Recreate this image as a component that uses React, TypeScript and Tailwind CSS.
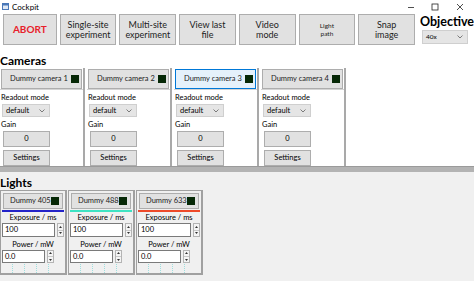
import React from 'react';

const toolButtons = [
  { lines: ['Single-site', 'experiment'] },
  { lines: ['Multi-site', 'experiment'] },
  { lines: ['View last', 'file'] },
  { lines: ['Video', 'mode'] },
  { lines: ['Light', 'path'], small: true },
  { lines: ['Snap', 'image'] },
];

const cameras = [
  { name: 'Dummy camera 1' },
  { name: 'Dummy camera 2' },
  { name: 'Dummy camera 3', focused: true },
  { name: 'Dummy camera 4' },
];

const lights = [
  { name: 'Dummy 405', line: 'bg-[#2323c8]' },
  { name: 'Dummy 488', line: 'bg-[#3fe3c3]' },
  { name: 'Dummy 633', line: 'bg-[#ee4a2a]' },
];

function Chevron() {
  return (
    <svg width="6" height="4" viewBox="0 0 6 4" fill="none">
      <path d="M0.5 0.5L3 3L5.5 0.5" stroke="#606060" strokeWidth="0.8" />
    </svg>
  );
}

function Spinner() {
  return (
    <div className="ml-[2px] flex h-full w-[7px] flex-col border border-[#b4b4b4] bg-[#f4f4f4]">
      <div className="flex flex-1 items-center justify-center border-b border-[#c8c8c8]">
        <svg width="3" height="2" viewBox="0 0 3 2">
          <path d="M0 2L1.5 0L3 2Z" fill="#333" />
        </svg>
      </div>
      <div className="flex flex-1 items-center justify-center">
        <svg width="3" height="2" viewBox="0 0 3 2">
          <path d="M0 0L1.5 2L3 0Z" fill="#333" />
        </svg>
      </div>
    </div>
  );
}

function CameraCard({ name, focused }: { name: string; focused?: boolean }) {
  return (
    <div className="flex w-[85px] flex-col border-r-2 border-[#a9a9a9]">
      <div
        className={`mx-[1px] mt-[1px] flex h-[20px] items-center justify-between border pl-[8px] pr-[2px] ${
          focused ? 'border-[#0078d7] bg-[#e5f1fb]' : 'border-[#adadad] bg-[#e1e1e1]'
        }`}
      >
        <span className="whitespace-nowrap text-[7.5px] leading-none text-[#222]">{name}</span>
        <span className="h-[8px] w-[8px] bg-[#062806]" />
      </div>
      <div className="h-[1px] bg-[#d4d4d4]" />
      <div className="mt-[3px] pl-[1px] text-[7.5px] leading-[10px]">Readout mode</div>
      <div className="ml-[2px] mt-[1px] flex h-[13px] w-[48px] items-center justify-between border border-[#cfcfcf] bg-[#e5e5e5] pl-[3px] pr-[4px]">
        <span className="text-[7.5px] leading-none">default</span>
        <Chevron />
      </div>
      <div className="mt-[3px] pl-[1px] text-[7.5px] leading-[10px]">Gain</div>
      <div className="ml-[3px] mt-[1px] flex h-[16px] w-[47px] items-center justify-center border border-[#adadad] bg-[#e1e1e1] text-[7.5px]">
        0
      </div>
      <div className="ml-[3px] mt-[3px] flex h-[16px] w-[47px] items-center justify-center border border-[#adadad] bg-[#e1e1e1] text-[7.5px]">
        Settings
      </div>
    </div>
  );
}

function LightCard({ name, line }: { name: string; line: string }) {
  return (
    <div className="flex h-[85px] w-[67px] flex-col border border-r-2 border-b-2 border-[#a0a0a0] bg-[#f0f0f0]">
      <div className="mx-[2px] mt-[2px] flex h-[17px] items-center justify-between border border-[#adadad] bg-[#e1e1e1] pl-[6px] pr-[3px]">
        <span className="whitespace-nowrap text-[7.5px] leading-none text-[#222]">{name}</span>
        <span className="h-[8px] w-[8px] bg-[#062806]" />
      </div>
      <div className={`mx-[1px] mt-[1px] h-[2px] ${line}`} />
      <div className="mt-[1px] whitespace-nowrap text-center text-[7.5px] leading-[10px]">Exposure / ms</div>
      <div className="ml-[1px] flex h-[14px] items-center">
        <div className="flex h-full w-[53px] items-center border border-[#7a7a7a] bg-white pl-[2px] text-[7.5px]">100</div>
        <Spinner />
      </div>
      <div className="mt-[3px] whitespace-nowrap text-center text-[7.5px] leading-[10px]">Power / mW</div>
      <div className="ml-[1px] flex h-[14px] items-center">
        <div className="flex h-full w-[43px] items-center border border-[#7a7a7a] bg-white pl-[2px] text-[7.5px]">0.0</div>
        <Spinner />
      </div>
      <div className="ml-[11px] mt-[1px] flex h-[9px] gap-[11px]">
        {[0, 1, 2, 3].map((i) => (
          <div key={i} className="h-full border-l border-dotted border-[#9edede]" />
        ))}
      </div>
    </div>
  );
}

export default function App() {
  return (
    <div
      className="flex h-[281px] w-[474px] flex-col overflow-hidden bg-white text-black"
      style={{ fontFamily: 'Lato, "Noto Sans", sans-serif' }}
    >
      {/* title bar */}
      <div className="flex h-[13px] items-center">
        <svg className="ml-[2px]" width="7" height="7" viewBox="0 0 7 7">
          <rect x="0.5" y="0.5" width="6" height="6" fill="#dfe8f4" stroke="#4a78b8" />
          <rect x="1" y="1" width="5" height="1.5" fill="#4a78b8" />
        </svg>
        <span className="ml-[3px] text-[8px] leading-none">Cockpit</span>
        <div className="ml-auto flex items-center">
          <svg width="8" height="8" viewBox="0 0 8 8" className="mr-[16px]">
            <path d="M1 4.5H7" stroke="#222" strokeWidth="0.8" />
          </svg>
          <svg width="8" height="8" viewBox="0 0 8 8" className="mr-[17px]">
            <rect x="1" y="1" width="6" height="6" fill="none" stroke="#222" strokeWidth="0.8" />
          </svg>
          <svg width="8" height="8" viewBox="0 0 8 8" className="mr-[10px]">
            <path d="M1 1L7 7M7 1L1 7" stroke="#222" strokeWidth="0.8" />
          </svg>
        </div>
      </div>

      {/* toolbar */}
      <div className="flex h-[34px] items-start gap-[3px] pl-[3px] pt-[1px]">
        <div className="flex h-[31px] w-[54px] items-center justify-center border border-[#adadad] bg-[#e1e1e1] text-[10px] font-bold text-[#e8202a]">
          ABORT
        </div>
        {toolButtons.map((b) => (
          <div
            key={b.lines[0]}
            className={`flex h-[31px] w-[57px] flex-col items-center justify-center border border-[#adadad] bg-[#e1e1e1] text-[#222] ${
              b.small ? 'text-[6.5px] leading-[8px]' : 'text-[9px] leading-[10px]'
            }`}
          >
            {b.lines.map((l) => (
              <span key={l} className="whitespace-nowrap">
                {l}
              </span>
            ))}
          </div>
        ))}
        <div className="ml-[2px] flex flex-col">
          <span className="whitespace-nowrap text-[12.5px] font-bold leading-[15px]">Objective</span>
          <div className="ml-[2px] mt-[1px] flex h-[14px] w-[46px] items-center justify-between border border-[#cfcfcf] bg-[#e5e5e5] pl-[3px] pr-[4px]">
            <span className="text-[6.5px] leading-none">40x</span>
            <Chevron />
          </div>
        </div>
      </div>

      {/* cameras */}
      <div className="mt-[6px] text-[12px] font-bold leading-[15px]">Cameras</div>
      <div className="flex h-[98px] gap-[2px]">
        {cameras.map((c) => (
          <CameraCard key={c.name} name={c.name} focused={c.focused} />
        ))}
      </div>

      {/* splitter */}
      <div className="h-[6px] border-t border-[#9a9a9a] bg-[#b3b3b3]" />

      {/* lights */}
      <div className="flex flex-1 flex-col bg-[#f0f0f0]">
        <div className="mt-[4px] text-[12px] font-bold leading-[13px]">Lights</div>
        <div className="mt-[1px] flex gap-[1px]">
          {lights.map((l) => (
            <LightCard key={l.name} name={l.name} line={l.line} />
          ))}
        </div>
      </div>
    </div>
  );
}
